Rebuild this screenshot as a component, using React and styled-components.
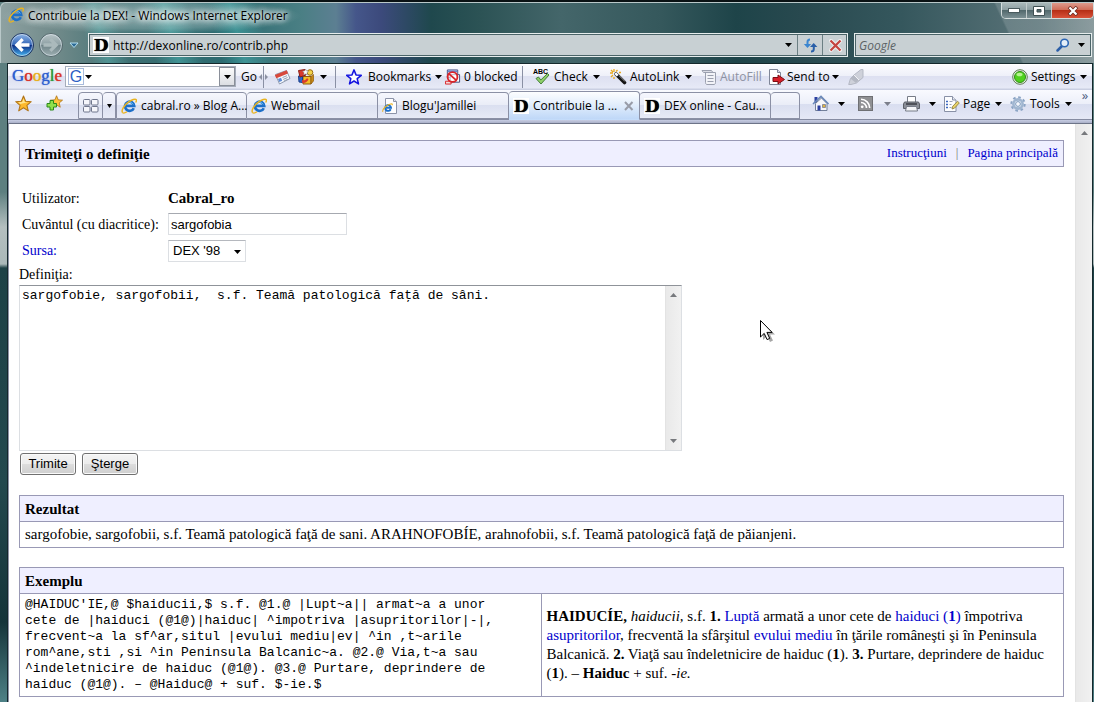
import React from "react";
import styled, { createGlobalStyle, css } from "styled-components";

const ui = `"Open Sans", "Noto Sans", sans-serif`;
const serif = `"Liberation Serif", "Times New Roman", serif`;
const sans = `"Liberation Sans", Arial, sans-serif`;
const mono = `"Liberation Mono", "Courier New", monospace`;

const Global = createGlobalStyle`
  *, *::before, *::after { box-sizing: border-box; }
  html { overflow: hidden; }
  body { margin: 0; background: #1d3f44; font-family: ${ui}; font-size: 12px; color: #000; }
  button, input, select, textarea { font: inherit; color: inherit; }
  svg { display: block; flex: none; }
`;

/* ---------- window frame ---------- */

const Window = styled.div`
  min-height: 100vh;
  display: flex;
  flex-direction: column;
  border-top: 2px solid #0a1214;
  background: linear-gradient(#5d7f80 0, #5d7f80 190px, #b4bfc0 225px, #aab8b9 262px, #1d4146 266px, #23494e 480px, #15343a 620px, #4f8388 702px);
`;

const Glass = styled.header`
  border-top: 1px solid #b9c8c9;
  border-left: 1px solid #b9c8c9;
  border-top-left-radius: 6px;
  background:
    radial-gradient(ellipse 150px 18px at 150px 13px, rgba(225, 236, 236, 0.5), rgba(225, 236, 236, 0.25) 70%, transparent),
    linear-gradient(75deg, transparent 0 88px, rgba(90, 220, 215, 0.28) 104px, transparent 124px 150px, rgba(90, 220, 215, 0.35) 172px, transparent 196px 214px, rgba(90, 225, 220, 0.32) 236px, transparent 262px),
    linear-gradient(65deg, transparent 0 925px, rgba(255, 255, 255, 0.14) 927px, rgba(255, 255, 255, 0.1) 1100px),
    linear-gradient(90deg, #8ea1a1 0, #6d8888 60px, #3d6f72 130px, #2b6a70 230px, #4a7f84 300px, #5c7f92 335px, #45568a 355px, #3c4a7c 380px, #1f484d 430px, #2c5355 480px, #44666a 560px, #35585c 660px, #1e4449 735px, #28494f 800px, #35575d 900px, #5b7479 1040px, #7c8f92 1094px);
`;

const TitleBar = styled.div`
  display: flex;
  align-items: flex-start;
  height: 29px;
  padding-left: 7px;
`;

const WindowTitle = styled.h1`
  display: flex;
  align-items: center;
  gap: 4px;
  flex: 1;
  height: 24px;
  margin: 0;
  font-size: 12px;
  font-weight: 400;
  text-shadow: 0 0 6px #fff, 0 0 6px #fff, 0 0 10px rgba(255, 255, 255, 0.8);
`;

const WindowButtons = styled.div`
  display: flex;
  height: 16px;
  border: 1px solid #d4dddd;
  border-top: 0;
  border-radius: 0 0 5px 5px;
  overflow: hidden;
`;

const WindowButton = styled.button`
  display: flex;
  align-items: center;
  justify-content: center;
  width: ${(p) => (p.$close ? 41 : 25)}px;
  padding: 0;
  border: 0;
  border-right: ${(p) => (p.$close ? "0" : "1px solid #c3cccd")};
  background: ${(p) =>
    p.$close
      ? "linear-gradient(#dd9a8c, #cf6a55 48%, #b62f17 50%, #d9523a)"
      : "linear-gradient(#a9b8ba, #8b9da0 48%, #52696d 50%, #7c9094)"};
`;

const NavRow = styled.div`
  display: flex;
  align-items: center;
  height: 31px;
  padding: 0 2px 5px 8px;
`;

const RoundButton = styled.button`
  width: 26px;
  height: 26px;
  margin-right: 3px;
  padding: 0;
  border: 0;
  background: none;
`;

const BareButton = styled.button`
  display: flex;
  align-items: center;
  justify-content: ${(p) => (p.$center ? "center" : "flex-start")};
  width: ${(p) => (p.$w ? `${p.$w}px` : "auto")};
  height: 22px;
  padding: 0;
  border: 0;
  background: none;
`;

const glassField = css`
  display: flex;
  align-items: center;
  height: 24px;
  border: 1px solid #e6eded;
  outline: 1px solid #4b6468;
  outline-offset: -2px;
  background: #c8d0d3;
`;

const AddressBar = styled.div`
  ${glassField}
  flex: 3;
  margin: 0 6px 0 8px;
  padding-left: 4px;
`;

const AddressInput = styled.input`
  flex: 1;
  min-width: 0;
  padding: 0 0 0 4px;
  border: 0;
  background: none;
  outline: none;
`;

const AddressAction = styled(BareButton)`
  border-left: 1px solid #6b7f83;
`;

const SearchBar = styled.div`
  ${glassField}
  flex: 1;
  max-width: 238px;
  padding-right: 3px;
`;

const SearchInput = styled(AddressInput)`
  &::placeholder {
    color: #5c6366;
    font-style: italic;
    opacity: 1;
  }
`;

/* ---------- toolbars ---------- */

const Client = styled.div`
  flex: 1;
  display: flex;
  flex-direction: column;
  margin: 0 1px 0 7px;
  border: 1px solid #14282c;
  border-bottom: 0;
`;

const bar = css`
  display: flex;
`;

const GoogleBar = styled.div`
  ${bar}
  align-items: center;
  height: 26px;
  padding: 0 5px 2px 4px;
  border-top: 1px solid #fff;
  background: linear-gradient(#fbfbfe, #eef0f9 44%, #dde0f1 46%, #e6e9f6 90%, #c3c9dd);
`;

const GoogleLogo = styled.a`
  width: 53px;
  margin-top: -2px;
  font: 17px/20px ${serif};
  text-decoration: none;
`;

const Letter = styled.span`
  color: ${(p) => p.$c};
  text-shadow: 0 0 1px ${(p) => p.$c};
`;

const SearchCombo = styled.div`
  display: flex;
  align-items: center;
  width: 171px;
  height: 21px;
  border: 1px solid #a5acb9;
  background: #fff;
`;

const ComboG = styled.span`
  width: 16px;
  margin-left: 2px;
  border: 1px solid #a9bcdc;
  color: #2d5fc4;
  font: 16px/15px ${sans};
  text-align: center;
`;

const ComboArrow = styled(BareButton)`
  height: 19px;
  border: 1px solid #8a8f99;
  background: linear-gradient(#fbfbfb, #dcdee3);
`;

const Tool = styled.button`
  display: flex;
  align-items: center;
  gap: ${(p) => p.$gap ?? 4}px;
  width: ${(p) => (p.$w ? `${p.$w}px` : "auto")};
  flex: none;
  height: 22px;
  padding: 0;
  border: 0;
  background: none;
  white-space: nowrap;
  color: ${(p) => (p.$off ? "#8e93a3" : "#000")};
`;

const ToolText = styled.span`
  flex: none;
  width: ${(p) => p.$w}px;
  text-align: left;
`;

const GoLabel = styled.span`
  padding-left: 5px;
`;

const Separator = styled.span`
  flex: none;
  width: 1px;
  height: 22px;
  margin-right: 10px;
  background: #8a90a4;
`;

const Splitter = styled.span`
  flex: none;
  display: grid;
  place-items: center;
  width: 9px;
  height: 22px;
  margin: 0 6px 0 -4px;
  background: linear-gradient(#8a90a4, #8a90a4) 4px 0 / 1px 100% no-repeat;
`;

const Push = styled.span`
  flex: 1;
`;

const TabBar = styled.div`
  ${bar}
  align-items: flex-end;
  height: 33px;
  padding: 0 2px 3px 6px;
  background: linear-gradient(#f9faff, #eceff9 42%, #d9def0 44%, #e5e8f6 88%, #7c8299 89%, #c4cae0 92%, #aab0c8);
`;

const Favorites = styled.div`
  display: flex;
  gap: 14px;
  width: 64px;
  height: 29px;
  padding: 1px 0 0 1px;
`;

const Tab = styled.button`
  display: flex;
  align-items: center;
  gap: 4px;
  flex: none;
  width: ${(p) => p.$w ?? 131}px;
  height: ${(p) => (p.$active ? 29 : 27)}px;
  margin-bottom: ${(p) => (p.$active ? 0 : 1)}px;
  padding: 0 0 0 4px;
  border: 1px solid #8b90a5;
  border-left-width: ${(p) => (p.$joined ? 0 : 1)}px;
  border-bottom-color: ${(p) => (p.$active ? "#c4dcfa" : "#8b90a5")};
  border-radius: 4px 4px 0 0;
  background: ${(p) =>
    p.$active
      ? "linear-gradient(#fdfeff, #e3eefc 45%, #bfd8f8)"
      : "linear-gradient(#f6f7fd, #eaedf7 46%, #dadff0 48%, #e7eaf6)"};
  text-align: left;
  white-space: nowrap;
`;

const TabLabel = styled.span`
  flex: 1;
`;

const CloseSlot = styled.span`
  padding-right: 5px;
`;

const Commands = styled.div`
  display: flex;
  align-items: center;
  height: 29px;
  margin-left: auto;
  padding-bottom: 4px;
`;

const More = styled.button`
  align-self: flex-start;
  width: 10px;
  padding: 0;
  border: 0;
  background: none;
  color: #4a5a80;
  font-size: 13px;
  line-height: 8px;
`;

/* ---------- page ---------- */

const Viewport = styled.div`
  flex: 1;
  display: flex;
  border-left: 1px solid #8d93a6;
  border-top: 1px solid #6d7488;
  background: #fff;
`;

const Page = styled.main`
  position: relative;
  flex: 1;
  min-width: 0;
  padding: 16px 11px 5px 10px;
  font: 15px/19px ${serif};
`;

const Scrollbar = styled.div`
  flex: none;
  display: flex;
  flex-direction: column;
  align-items: center;
  justify-content: space-between;
  width: ${(p) => p.$w}px;
  padding: 7px 0;
  border-left: 1px solid #e3e3e3;
  background: linear-gradient(90deg, #e9e9e9, #f1f1f1);
`;

const Panel = styled.section`
  border: 1px solid #9999b5;
  margin-bottom: 19px;
`;

const PanelHead = styled.div`
  display: flex;
  align-items: center;
  justify-content: space-between;
  height: 25px;
  padding: 0 5px;
  background: #efefff;
`;

const PanelTitle = styled.h2`
  margin: 2px 0 0;
  font-size: 15px;
  line-height: 19px;
  font-weight: 700;
`;

const PanelBody = styled.div`
  display: grid;
  grid-template-columns: ${(p) => (p.$split ? "1fr 1fr" : "1fr")};
  align-items: center;
  border-top: 1px solid #9999b5;
`;

const Cell = styled.div`
  padding: 3px 5px;
`;

const SourceCell = styled(Cell)`
  align-self: stretch;
  border-right: 1px solid #9999b5;
`;

const Source = styled.pre`
  margin: 0;
  font: 13px/16px ${mono};
`;

const Link = styled.a`
  color: #0000cc;
  text-decoration: none;
`;

const TopLinks = styled.nav`
  display: flex;
  gap: 9px;
  padding-bottom: 2px;
  font-size: 13px;
  line-height: 18px;
  color: #777;
`;

const Form = styled.form`
  margin: 19px 0 20px;
`;

const Fields = styled.div`
  display: grid;
  grid-template-columns: 146px 1fr;
  grid-template-rows: 25px 26px 27px;
  align-items: center;
  padding-left: 3px;
`;

const FieldName = styled.label`
  font-size: 14px;
  white-space: nowrap;
`;

const TextBox = styled.input`
  width: 179px;
  height: 22px;
  padding: 0 2px;
  border: 1px solid #dcdfe3;
  border-top-color: #a6a9b0;
  font: 13px/18px ${sans};
`;

const SelectWrap = styled.span`
  position: relative;
  width: 78px;
  height: 22px;
`;

const Select = styled.select`
  appearance: none;
  width: 100%;
  height: 100%;
  padding: 0 4px;
  border: 1px solid #dcdfe3;
  border-top-color: #b5b8be;
  border-radius: 0;
  background: #fff;
  font: 13px/18px ${sans};
`;

const SelectArrow = styled.span`
  position: absolute;
  right: 5px;
  top: 10px;
  pointer-events: none;
`;

const AreaWrap = styled.div`
  display: flex;
  width: 663px;
  max-width: 100%;
  height: 166px;
  border: 1px solid #dcdfe3;
  border-top-color: #8f9399;
`;

const AreaLabel = styled(FieldName)`
  display: block;
  height: 21px;
  line-height: 22px;
`;

const Area = styled.textarea`
  flex: 1;
  min-width: 0;
  padding: 2px;
  border: 0;
  outline: none;
  resize: none;
  overflow: hidden;
  font: 13px/16px ${mono};
`;

const Actions = styled.div`
  display: flex;
  gap: 6px;
  padding: 2px 1px 0;
`;

const PushButton = styled.button`
  min-width: 56px;
  height: 22px;
  padding: 0 7px;
  border: 1px solid #707070;
  border-radius: 3px;
  background: linear-gradient(#f4f4f4, #ececec 48%, #dddddd 50%, #cfcfcf);
  box-shadow: inset 0 0 0 1px #fafafa;
  font: 13px/18px ${sans};
`;

const Pointer = styled.span`
  position: absolute;
  left: 750px;
  top: 195px;
  pointer-events: none;
`;

/* ---------- drawings ---------- */

const Caret = ({ c = "#000", w = 7, up }) => (
  <svg width={w} height="4" viewBox="0 0 7 4" preserveAspectRatio="none" aria-hidden="true">
    <path d={up ? "M0 4h7L3.500 0z" : "M0 0h7L3.500 4z"} fill={c} />
  </svg>
);

const SplitArrows = () => (
  <svg width="9" height="6" viewBox="0 0 9 6" aria-hidden="true">
    <path d="M3 0v6L0 3zM6 0v6l3-3z" fill="#8a90a0" />
  </svg>
);

const IeIcon = () => (
  <svg width="16" height="16" viewBox="0 0 16 16" aria-hidden="true">
    <path d="M12.800 10.200a4.600 4.600 0 1 1 .4-2.400H5" fill="none" stroke="#1c6fc9" strokeWidth="2.700" />
    <path d="M12.300 6.500a4.300 4.300 0 0 0-7.600-.3" fill="none" stroke="#5fb7f2" strokeWidth="1" />
    <path d="M1.700 14.700C-.2 12.600 3 7.300 7.400 4.200 10.900 1.600 14.400.4 15.200 1.700c.4.700.1 1.700-.5 2.800" fill="none" stroke="#e9b321" strokeWidth="1.500" />
    <path d="M1.700 14.700c1 .8 2.700.1 4.300-.9" fill="none" stroke="#e9b321" strokeWidth="1.300" />
  </svg>
);

const IePageIcon = () => (
  <svg width="16" height="16" viewBox="0 0 16 16" aria-hidden="true">
    <path d="M3.500.5h8l3 3v12h-11z" fill="#fdfdff" stroke="#8c93a8" />
    <path d="M11.500.5v3h3" fill="#dfe4f0" stroke="#8c93a8" />
    <path d="M8.700 11.300a2.900 2.900 0 1 1 .3-1.600H3.400" fill="none" stroke="#1c6fc9" strokeWidth="1.900" />
    <path d="M.8 13.800C0 11.500 5 6 9.600 5.700c.9 0 .8.900.4 1.500" fill="none" stroke="#e9b321" strokeWidth="1.100" />
  </svg>
);

const DBadge = styled.span`
  flex: none;
  width: 16px;
  height: 16px;
  background: #fff;
  font: 900 17px/16px "DejaVu Serif", serif;
  text-align: center;
  text-shadow: 0 0 1px #000;
`;
const DIcon = () => <DBadge aria-hidden="true">D</DBadge>;

const NavCircle = ({ back }) => (
  <svg width="26" height="26" viewBox="0 0 26 26" aria-hidden="true">
    <defs>
      <linearGradient id={back ? "nb" : "nf"} x1="0" y1="0" x2="0" y2="1">
        <stop offset="0" stopColor={back ? "#8fb6e8" : "#b9c6c8"} />
        <stop offset=".48" stopColor={back ? "#3768b8" : "#8fa1a5"} />
        <stop offset=".52" stopColor={back ? "#0c2f86" : "#708589"} />
        <stop offset="1" stopColor={back ? "#49b8f4" : "#9fb0b3"} />
      </linearGradient>
    </defs>
    <circle cx="13" cy="13" r="11.500" fill={back ? "url(#nb)" : "url(#nf)"} stroke={back ? "#20365f" : "#54686c"} />
    <circle cx="13" cy="13" r="10.500" fill="none" stroke="#e2ecf3" strokeOpacity=".6" />
    <path
      d={back ? "M5.500 13l7-7 2.300 2.300-2.800 2.900H20.500v3.600H12l2.800 2.900-2.300 2.300z" : "M20.500 13l-7-7-2.300 2.300 2.800 2.900H5.500v3.600H14l-2.800 2.900 2.300 2.300z"}
      fill={back ? "#fff" : "#abbabc"}
    />
  </svg>
);

const RefreshIcon = () => (
  <svg width="15" height="15" viewBox="0 0 15 15" aria-hidden="true">
    <path d="M7 1.500C5 1.500 4.500 2.500 4.500 4v2.500" fill="none" stroke="#3b86d0" strokeWidth="2" />
    <path d="M.8 6h7.400L4.500 10z" fill="#3b86d0" />
    <path d="M8 13.500c2 0 2.800-1 2.800-2.500V8.500" fill="none" stroke="#2a5fa8" strokeWidth="2" />
    <path d="M7 9h7.400L10.700 5z" fill="#2a5fa8" />
  </svg>
);

const StopIcon = () => (
  <svg width="13" height="13" viewBox="0 0 13 13" aria-hidden="true">
    <path d="M2 2l9 9M11 2l-9 9" stroke="#fff" strokeWidth="4" strokeLinecap="round" strokeOpacity=".7" />
    <path d="M1.500 1.500l10 10M11.500 1.500l-10 10" stroke="#c4443f" strokeWidth="2.300" />
  </svg>
);

const LensIcon = () => (
  <svg width="14" height="14" viewBox="0 0 14 14" aria-hidden="true">
    <path d="M6 8L1.500 12.500" stroke="#2c5fa8" strokeWidth="2.500" strokeLinecap="round" />
    <circle cx="8.500" cy="5" r="3.800" fill="#e3eef8" stroke="#2c66b4" strokeWidth="1.600" />
  </svg>
);

const NewsIcon = () => (
  <svg width="17" height="16" viewBox="0 0 17 16" aria-hidden="true">
    <path d="M1.500 5.500l11-4 3.500 8-10.500 5.500z" fill="#f4f7fc" stroke="#8f9bb0" />
    <path d="M.8 6L12.800 1.200l1.200 3.300L2.300 9.200z" fill="#d8493c" />
    <path d="M4 10l3-1.200 1.200 3-2.900 1.300z" fill="#5f8bd4" />
    <path d="M8.500 8.500l4.500-1.800M9.200 10.400l4.400-1.900M10 12l4-1.700" stroke="#98a2b4" />
  </svg>
);

const BoxIcon = () => (
  <svg width="17" height="17" viewBox="0 0 17 17" aria-hidden="true">
    <path d="M6 8.500h8v7.500H6z" fill="#f2bd28" stroke="#8d5a10" />
    <path d="M14 8.500l2.500-2v6.500L14 16z" fill="#c98a14" stroke="#8d5a10" strokeWidth=".7" />
    <path d="M1.500 8h4v6.500l-3.500-.5z" fill="#2f65c8" stroke="#1c3f88" />
    <path d="M1.500 2.500l6.500-1 1 5.500-6 2z" fill="#d93a2e" stroke="#8b1d14" />
    <circle cx="13" cy="4.500" r="2.800" fill="#f4d44a" stroke="#9a6b10" />
    <path d="M8.500 1l1 2 2 .3L10 4.800l.3 2.100-1.800-1-1.800 1L7 4.800 5.500 3.300l2-.3z" fill="#fff" stroke="#777" strokeWidth=".5" />
    <path d="M5 12c2 .8 4 0 5-2l1.500 1.500c-1.500 3-4.500 4-6.500 3z" fill="#d93a2e" />
  </svg>
);

const star = "M8 .9l2 5 5.300.4-4.100 3.400 1.300 5.200L8 12l-4.500 2.900 1.300-5.200L.7 6.300 6 5.900z";
const BlueStar = () => (
  <svg width="16" height="16" viewBox="0 0 16 16" aria-hidden="true">
    <path d={star} fill="#fff" stroke="#1414e0" strokeWidth="1.500" strokeLinejoin="round" />
  </svg>
);
const GoldStar = () => (
  <svg width="17" height="17" viewBox="0 0 16 16" aria-hidden="true">
    <path d={star} fill="#fdb92c" stroke="#b0741a" strokeLinejoin="round" />
    <path d="M8 3.200l1.200 3.500 2.800.2-7 1.600-2-1.600 3.800-.2z" fill="#ffe58c" />
  </svg>
);
const AddStar = () => (
  <svg width="17" height="17" viewBox="0 0 17 17" aria-hidden="true">
    <g transform="translate(4 0) scale(.82)">
      <path d={star} fill="#fdc23c" stroke="#b0741a" strokeLinejoin="round" />
    </g>
    <path d="M4 5.500h3.500v3h3V12h-3v3H4v-3H1V8.500h3z" fill="#8fe04c" stroke="#2b8a1c" strokeLinejoin="round" />
  </svg>
);

const BlockedIcon = () => (
  <svg width="16" height="16" viewBox="0 0 17 16" aria-hidden="true">
    <path d="M2.500.5h11v8h-11z" fill="#fff" stroke="#3c4a7c" />
    <path d="M3 1h10v2H3z" fill="#6a84c8" />
    <path d="M5.500 5.500h10v8h-10z" fill="#fff" stroke="#3c4a7c" />
    <path d="M.5 12.500h6v3h-6z" fill="#f6d9d9" stroke="#d9242a" />
    <circle cx="8" cy="8" r="5.200" fill="#fff" fillOpacity=".6" stroke="#d9242a" strokeWidth="2" />
    <path d="M4.300 4.700l7.500 6.600" stroke="#d9242a" strokeWidth="2" />
  </svg>
);

const AbcMark = styled.span`
  position: relative;
  width: 18px;
  height: 17px;
  font: 700 7px/7px ${sans};
  text-align: left;
`;
const AbcCheck = styled.svg`
  position: absolute;
  left: 1px;
  top: 3px;
`;
const CheckIcon = () => (
  <AbcMark>
    ABC
    <AbcCheck width="16" height="14" viewBox="0 0 16 14" aria-hidden="true">
      <path d="M2 7.500L4.500 6l2.300 3L13.500 2.500 15 4 7 13z" fill="#8fcf6a" stroke="#44803a" strokeLinejoin="round" />
    </AbcCheck>
  </AbcMark>
);

const WandIcon = () => (
  <svg width="17" height="16" viewBox="0 0 17 16" aria-hidden="true">
    <path d="M6 5l8.500 8.500" stroke="#151515" strokeWidth="3.600" strokeLinecap="round" />
    <path d="M9 6.500l6 6" stroke="#aaa" strokeWidth=".9" />
    <path d="M5.200 4.200l2.500 2.500" stroke="#fff" strokeWidth="2.600" />
    <path d="M4 0v3M0 4h3M1 1l2 2M7.500 1L6 2.500M1 8l2-2M9 3.500h2M4 8v2" stroke="#e9a91f" strokeWidth="1.300" />
  </svg>
);

const FillIcon = () => (
  <svg width="16" height="16" viewBox="0 0 16 16" aria-hidden="true">
    <path d="M4.500 3.500h10v10c0 1-.5 2-1.500 2H6c-1 0-1.500-1-1.500-2z" fill="#f2f3f8" stroke="#9a9fae" />
    <path d="M1 1.500h9c1 0 1.500 1 1.500 2H3C2 3.500 1.500 2.500 1 1.500z" fill="#d9dbe4" stroke="#9a9fae" />
    <path d="M6.500 6.500h6M6.500 9.500h6M6.500 12.500h6" stroke="#9a9fae" />
  </svg>
);

const SendIcon = () => (
  <svg width="16" height="16" viewBox="0 0 16 16" aria-hidden="true">
    <path d="M.5.5h8l3 3v12H.5z" fill="#fff" stroke="#7f8698" />
    <path d="M8.500.5v3h3" fill="#dde" stroke="#7f8698" />
    <path d="M4 8.500h5V6l6.500 4.500L9 15v-2.500H4z" fill="#d81f2a" stroke="#7d0d14" />
  </svg>
);

const MarkerIcon = () => (
  <svg width="16" height="16" viewBox="0 0 16 16" aria-hidden="true">
    <path d="M6 6L13 .5h2v8L8.500 14l-5.500 1.500H.7L2.500 9.500z" fill="#ced1da" stroke="#b4b8c4" />
    <path d="M2.500 9.500L6 6l5 5-3 3z" fill="#b4b8c3" />
    <path d="M6 6l5 5" stroke="#f2f3f7" />
  </svg>
);

const GreenDot = () => (
  <svg width="16" height="16" viewBox="0 0 16 16" aria-hidden="true">
    <circle cx="8" cy="8" r="7.300" fill="#e9efe6" stroke="#5c7a52" />
    <circle cx="8" cy="8" r="5.500" fill="#4fd21e" stroke="#2f8f14" />
    <ellipse cx="7.500" cy="5.500" rx="3" ry="1.800" fill="#b5f391" />
  </svg>
);

const QuadIcon = () => (
  <svg width="16" height="14" viewBox="0 0 16 14" aria-hidden="true">
    {[[0.5, 0.5], [8.5, 0.5], [0.5, 7.5], [8.5, 7.5]].map(([x, y]) => (
      <rect key={`${x}-${y}`} x={x} y={y} width="6.500" height="5.500" rx="1" fill="#f5f6fb" stroke="#6f768c" />
    ))}
  </svg>
);

const TabClose = () => (
  <svg width="10" height="10" viewBox="0 0 10 10" aria-hidden="true">
    <path d="M1 1l7.500 8M8.500 1L1 9" stroke="#989ca8" strokeWidth="2" />
  </svg>
);

const HomeIcon = () => (
  <svg width="18" height="18" viewBox="0 0 18 18" aria-hidden="true">
    <path d="M2.500 2h3v6h-3z" fill="#2b3fa0" />
    <path d="M3.500 8.500L9.500 3l5.500 5.500v7h-11.500z" fill="#f6f6fa" stroke="#73809a" />
    <path d="M1 9l8-7.500L16.500 9" fill="none" stroke="#6a88b8" strokeWidth="1.700" />
    <path d="M5.500 10.500h3v5h-3z" fill="#2b3fa0" />
    <path d="M10.500 9.500h3v3h-3z" fill="#e0b541" stroke="#6a7390" strokeWidth=".7" />
  </svg>
);

const FeedIcon = () => (
  <svg width="15" height="15" viewBox="0 0 15 15" aria-hidden="true">
    <rect x=".5" y=".5" width="14" height="14" fill="#8f9093" stroke="#6f7074" />
    <circle cx="4.200" cy="10.800" r="1.400" fill="#fff" />
    <path d="M3 6.500a5.500 5.500 0 0 1 5.500 5.500M3 3.300a8.700 8.700 0 0 1 8.700 8.700" fill="none" stroke="#fff" strokeWidth="1.600" />
  </svg>
);

const PrinterIcon = () => (
  <svg width="17" height="16" viewBox="0 0 17 16" aria-hidden="true">
    <path d="M4.500.5h8v6h-8z" fill="#fff" stroke="#777c88" />
    <path d="M1.500 6h14l1 2v4.500h-16V8z" fill="#8b8f98" stroke="#5c6068" />
    <path d="M3.500 10.500h10l1 4.500h-12z" fill="#f4f5f8" stroke="#777c88" />
    <path d="M3 8h11" stroke="#3a3d45" strokeWidth="1.500" />
  </svg>
);

const PageIcon = () => (
  <svg width="17" height="16" viewBox="0 0 17 16" aria-hidden="true">
    <path d="M1.500.5h8l3.500 3.500v11.500H1.500z" fill="#fcfdff" stroke="#8890a6" />
    <path d="M9.500.5V4H13" fill="#e5e9f3" stroke="#8890a6" />
    <path d="M3 5.500h2M3 8.500h2M3 11.500h2" stroke="#3c68c0" strokeWidth="1.400" />
    <path d="M6.500 5.500h3M6.500 8.500h2M6.500 11.500h2" stroke="#9aa2b5" />
    <path d="M9 13l.7-2.700 4.800-5 1.800 1.600-4.700 5.200z" fill="#e8d36a" stroke="#8a7a35" strokeWidth=".8" />
  </svg>
);

const GearIcon = () => (
  <svg width="16" height="16" viewBox="0 0 16 16" aria-hidden="true">
    <circle cx="8" cy="8" r="6.700" fill="none" stroke="#8ba4c4" strokeWidth="2" strokeDasharray="2.600 2.660" />
    <circle cx="8" cy="8" r="4.600" fill="#e9eff7" stroke="#9fb5d0" strokeWidth="2.600" />
    <circle cx="8" cy="8" r="2.400" fill="#f5f7fc" stroke="#7f9bbd" />
  </svg>
);

const PointerIcon = () => (
  <svg width="17" height="24" viewBox="0 0 17 24" aria-hidden="true">
    <path d="M4 4v17l4-4 3 6 3-1.500-3-6h5z" fill="#000" opacity=".35" />
    <path d="M1.500 1.500v16.500l3.700-3.600 2.900 6.200 2.600-1.200-2.800-6h5.200z" fill="#fff" stroke="#000" />
  </svg>
);

const exampleSource = `@HAIDUC'IE,@ $haiducii,$ s.f. @1.@ |Lupt~a|| armat~a a unor
cete de |haiduci (@1@)|haiduc| ^impotriva |asupritorilor|-|,
frecvent~a la sf^ar,situl |evului mediu|ev| ^in ,t~arile
rom^ane,sti ,si ^in Peninsula Balcanic~a. @2.@ Via,t~a sau
^indeletnicire de haiduc (@1@). @3.@ Purtare, deprindere de
haiduc (@1@). – @Haiduc@ + suf. $-ie.$`;

const logoLetters = [["G", "#2f5fd0"], ["o", "#d8322a"], ["o", "#e8b020"], ["g", "#2f5fd0"], ["l", "#2a9a3c"], ["e", "#d8322a"]];

export default function App() {
  return (
    <Window>
      <Global />
      <Glass>
        <TitleBar>
          <WindowTitle>
            <IeIcon />
            Contribuie la DEX! - Windows Internet Explorer
          </WindowTitle>
          <WindowButtons>
            <WindowButton aria-label="Minimize">
              <svg width="12" height="5" viewBox="0 0 12 5"><rect x=".5" y=".5" width="11" height="4" fill="#fff" stroke="#4a5b5e" /></svg>
            </WindowButton>
            <WindowButton aria-label="Maximize">
              <svg width="12" height="10" viewBox="0 0 12 10"><path d="M.5.5h11v9H.5zM4 3.500h4v2.500H4z" fill="#fff" fillRule="evenodd" stroke="#3f5053" /></svg>
            </WindowButton>
            <WindowButton $close aria-label="Close">
              <svg width="12" height="10" viewBox="0 0 12 10"><path d="M2 1l8 8M10 1L2 9" stroke="#6a2a20" strokeWidth="3.600" /><path d="M2.500 1.500l7 7M9.500 1.500l-7 7" stroke="#fff" strokeWidth="2.200" /></svg>
            </WindowButton>
          </WindowButtons>
        </TitleBar>
        <NavRow>
          <RoundButton aria-label="Back"><NavCircle back /></RoundButton>
          <RoundButton aria-label="Forward"><NavCircle /></RoundButton>
          <BareButton $w={13} $center aria-label="Recent pages">
            <svg width="10" height="7" viewBox="0 0 10 7"><path d="M1 1h8L5 5.500z" fill="#2c6a94" stroke="#b4dff2" /></svg>
          </BareButton>
          <AddressBar>
            <DIcon />
            <AddressInput aria-label="Address" defaultValue="http://dexonline.ro/contrib.php" />
            <BareButton $w={18} $center aria-label="Show addresses"><Caret /></BareButton>
            <AddressAction $w={25} $center aria-label="Refresh"><RefreshIcon /></AddressAction>
            <AddressAction $w={25} $center aria-label="Stop"><StopIcon /></AddressAction>
          </AddressBar>
          <SearchBar>
            <SearchInput aria-label="Search" placeholder="Google" />
            <BareButton $w={22} aria-label="Search"><LensIcon /></BareButton>
            <BareButton $w={10} aria-label="Search options"><Caret /></BareButton>
          </SearchBar>
        </NavRow>
      </Glass>

      <Client>
        <GoogleBar>
          <GoogleLogo href="#google">
            {logoLetters.map(([ch, c], i) => <Letter key={i} $c={c}>{ch}</Letter>)}
          </GoogleLogo>
          <SearchCombo>
            <ComboG>G</ComboG>
            <BareButton $w={9} $center aria-label="Search type"><Caret /></BareButton>
            <AddressInput aria-label="Google search" />
            <ComboArrow $w={16} $center aria-label="Search history"><Caret /></ComboArrow>
          </SearchCombo>
          <Tool $w={27}><GoLabel>Go</GoLabel></Tool>
          <Splitter><SplitArrows /></Splitter>
          <Tool $w={23} aria-label="News"><NewsIcon /></Tool>
          <Tool $w={38} $gap={6} aria-label="Games"><BoxIcon /><Caret /></Tool>
          <Separator />
          <Tool $w={99} $gap={6}><BlueStar /><ToolText $w={61}>Bookmarks</ToolText><Caret /></Tool>
          <Tool $w={77} $gap={3}><BlockedIcon />0 blocked</Tool>
          <Separator />
          <Tool $w={77} $gap={3}><CheckIcon /><ToolText $w={36}>Check</ToolText><Caret /></Tool>
          <Tool $w={91} $gap={3}><WandIcon /><ToolText $w={52}>AutoLink</ToolText><Caret /></Tool>
          <Tool $w={68} $gap={3} $off><FillIcon />AutoFill</Tool>
          <Tool $w={79} $gap={2}><SendIcon /><ToolText $w={43}>Send to</ToolText><Caret /></Tool>
          <Tool aria-label="Highlight"><MarkerIcon /></Tool>
          <Push />
          <Tool $gap={3}><GreenDot /><ToolText $w={46}>Settings</ToolText><Caret /></Tool>
        </GoogleBar>

        <TabBar>
          <Favorites>
            <BareButton aria-label="Favorites"><GoldStar /></BareButton>
            <BareButton aria-label="Add to favorites"><AddStar /></BareButton>
          </Favorites>
          <Tab $w={25} aria-label="Quick tabs"><QuadIcon /></Tab>
          <Tab $w={13} $joined aria-label="Tab list"><Caret w={5} /></Tab>
          <Tab><IeIcon /><TabLabel>cabral.ro » Blog A...</TabLabel></Tab>
          <Tab $joined><IeIcon /><TabLabel>Webmail</TabLabel></Tab>
          <Tab $joined><IePageIcon /><TabLabel>Blogu'Jamillei</TabLabel></Tab>
          <Tab $active $joined><DIcon /><TabLabel>Contribuie la ...</TabLabel><CloseSlot><TabClose /></CloseSlot></Tab>
          <Tab $joined><DIcon /><TabLabel>DEX online - Cau...</TabLabel></Tab>
          <Tab $w={29} $joined aria-label="New tab" />
          <Commands>
            <Tool $w={46} $gap={8} aria-label="Home"><HomeIcon /><Caret /></Tool>
            <Tool $w={45} $gap={11} aria-label="Feeds"><FeedIcon /><Caret c="#7b7f8b" /></Tool>
            <Tool $w={40} $gap={9} aria-label="Print"><PrinterIcon /><Caret /></Tool>
            <Tool $w={67} $gap={3}><PageIcon /><ToolText $w={29}>Page</ToolText><Caret /></Tool>
            <Tool $w={70}><GearIcon /><ToolText $w={31}>Tools</ToolText><Caret /></Tool>
            <More aria-label="More">»</More>
          </Commands>
        </TabBar>

        <Viewport>
          <Page>
            <Panel>
              <PanelHead>
                <PanelTitle>Trimiteţi o definiţie</PanelTitle>
                <TopLinks>
                  <Link href="#instructiuni">Instrucţiuni</Link>
                  <span>|</span>
                  <Link href="#principala">Pagina principală</Link>
                </TopLinks>
              </PanelHead>
            </Panel>

            <Form onSubmit={(e) => e.preventDefault()}>
              <Fields>
                <FieldName as="span">Utilizator:</FieldName>
                <b>Cabral_ro</b>
                <FieldName htmlFor="word">Cuvântul (cu diacritice):</FieldName>
                <TextBox id="word" defaultValue="sargofobia" />
                <FieldName htmlFor="source"><Link href="#sursa">Sursa:</Link></FieldName>
                <SelectWrap>
                  <Select id="source" defaultValue="98"><option value="98">DEX '98</option></Select>
                  <SelectArrow><Caret /></SelectArrow>
                </SelectWrap>
              </Fields>
              <AreaLabel htmlFor="definition">Definiţia:</AreaLabel>
              <AreaWrap>
                <Area id="definition" spellCheck="false" defaultValue="sargofobie, sargofobii,  s.f. Teamă patologică faţă de sâni." />
                <Scrollbar $w={16}><Caret up c="#77797d" /><Caret c="#77797d" /></Scrollbar>
              </AreaWrap>
              <Actions>
                <PushButton type="submit">Trimite</PushButton>
                <PushButton type="reset">Şterge</PushButton>
              </Actions>
            </Form>

            <Panel>
              <PanelHead><PanelTitle>Rezultat</PanelTitle></PanelHead>
              <PanelBody>
                <Cell>sargofobie, sargofobii, s.f. Teamă patologică faţă de sani. ARAHNOFOBÍE, arahnofobii, s.f. Teamă patologică faţă de păianjeni.</Cell>
              </PanelBody>
            </Panel>

            <Panel>
              <PanelHead><PanelTitle>Exemplu</PanelTitle></PanelHead>
              <PanelBody $split>
                <SourceCell><Source>{exampleSource}</Source></SourceCell>
                <Cell>
                  <b>HAIDUCÍE,</b> <i>haiducii,</i> s.f. <b>1.</b> <Link href="#lupta">Luptă</Link> armată a unor cete de{" "}
                  <Link href="#haiduc">haiduci (<b>1</b>)</Link> împotriva <Link href="#asupritor">asupritorilor</Link>, frecventă la
                  sfârşitul <Link href="#ev">evului mediu</Link> în ţările româneşti şi în Peninsula Balcanică. <b>2.</b> Viaţă sau
                  îndeletnicire de haiduc (<b>1</b>). <b>3.</b> Purtare, deprindere de haiduc (<b>1</b>). – <b>Haiduc</b> + suf. <i>-ie.</i>
                </Cell>
              </PanelBody>
            </Panel>
            <Pointer><PointerIcon /></Pointer>
          </Page>
          <Scrollbar $w={17}><Caret up c="#77797d" /></Scrollbar>
        </Viewport>
      </Client>
    </Window>
  );
}
